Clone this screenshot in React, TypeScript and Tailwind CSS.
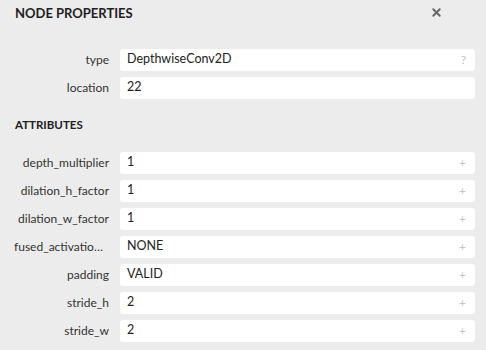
import { X } from "lucide-react";

type Row = { label: string; value: string; icon: "?" | "+" };

const props: Row[] = [
  { label: "type", value: "DepthwiseConv2D", icon: "?" },
  { label: "location", value: "22", icon: "?" },
];

const attrs: Row[] = [
  { label: "depth_multiplier", value: "1", icon: "+" },
  { label: "dilation_h_factor", value: "1", icon: "+" },
  { label: "dilation_w_factor", value: "1", icon: "+" },
  { label: "fused_activation_function", value: "NONE", icon: "+" },
  { label: "padding", value: "VALID", icon: "+" },
  { label: "stride_h", value: "2", icon: "+" },
  { label: "stride_w", value: "2", icon: "+" },
];

function PropRow({ row, showIcon }: { row: Row; showIcon: boolean }) {
  return (
    <div className="flex items-center h-[22px]">
      <div className="w-[110px] shrink-0 pl-[14px] pr-[1px] text-right truncate text-[12px] text-[#333]">
        {row.label}
      </div>
      <div className="flex-1 h-[22px] bg-white rounded-[3px] flex items-center pl-[7px] pr-[9px] ml-[10px] text-[12.5px] text-[#222]">
        <span className="flex-1">{row.value}</span>
        {showIcon && (
          <span className="text-[12px] text-[#c4c4c4]">{row.icon}</span>
        )}
      </div>
    </div>
  );
}

export default function App() {
  return (
    <div
      className="w-[486px] h-[350px] bg-[#ececec] overflow-hidden"
      style={{ fontFamily: 'Lato, "Noto Sans", sans-serif' }}
    >
      <div className="flex items-start justify-between pl-[15px] pr-[43px] pt-[4px]">
        <div className="text-[13px] font-bold text-[#222]">
          NODE PROPERTIES
        </div>
        <X className="w-[13px] h-[13px] mt-[2px] text-[#666]" strokeWidth={3.5} />
      </div>
      <div className="flex flex-col gap-[6px] pr-[11px] mt-[25px]">
        {props.map((r) => (
          <PropRow key={r.label} row={r} showIcon={r.label === "type"} />
        ))}
      </div>
      <div className="pl-[15px] mt-[17px] text-[11.5px] font-bold text-[#222]">
        ATTRIBUTES
      </div>
      <div className="flex flex-col gap-[6px] pr-[11px] mt-[19px]">
        {attrs.map((r) => (
          <PropRow key={r.label} row={r} showIcon />
        ))}
      </div>
    </div>
  );
}
